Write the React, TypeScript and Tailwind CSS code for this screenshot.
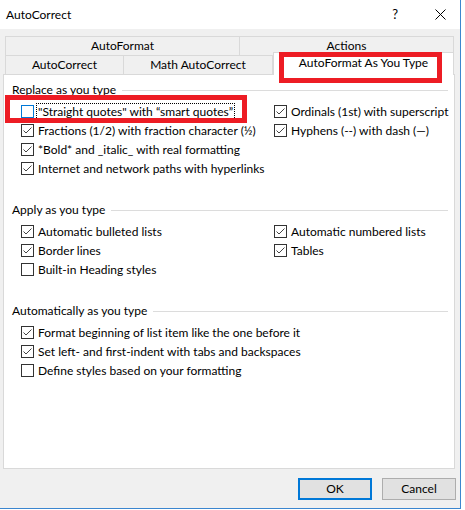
import React from "react";

const font = { fontFamily: 'Lato, "Noto Sans", Arial, sans-serif' };

function Box({ checked, focus }: { checked?: boolean; focus?: boolean }) {
  return (
    <svg width="13" height="13" viewBox="0 0 13 13" className="shrink-0">
      <rect
        x="0.5"
        y="0.5"
        width="12"
        height="12"
        fill="#ffffff"
        stroke={focus ? "#0078d7" : "#333333"}
      />
      {checked && (
        <polyline
          points="2.5,6.5 5,9 10.5,3.5"
          fill="none"
          stroke="#444444"
          strokeWidth="1"
        />
      )}
    </svg>
  );
}

function Row({
  label,
  checked,
  focus,
}: {
  label: string;
  checked?: boolean;
  focus?: boolean;
}) {
  return (
    <div className="flex h-[19px] items-center">
      <Box checked={checked} focus={focus} />
      {focus ? (
        <span className="ml-[2px] border border-dotted border-black px-[1px] leading-[15px]">
          {label}
        </span>
      ) : (
        <span className="ml-[4px] whitespace-nowrap">{label}</span>
      )}
    </div>
  );
}

function Header({ label }: { label: string }) {
  return (
    <div className="flex h-[16px] items-center pr-[6px]">
      <span className="whitespace-nowrap">{label}</span>
      <div className="ml-[6px] h-px flex-1 bg-[#dcdcdc]" />
    </div>
  );
}

export default function App() {
  return (
    <div
      className="relative h-[510px] w-[465px] bg-white text-[12px] text-black"
      style={font}
    >
      <div className="flex h-[509px] w-[461px] flex-col border-b border-r border-[#3b86cf]">
        {/* title bar */}
        <div className="flex h-[29px] items-center bg-white pl-[6px]">
          <span className="flex-1 text-[12px]">AutoCorrect</span>
          <span className="mr-[37px] text-[13px]">?</span>
          <svg width="11" height="11" viewBox="0 0 11 11" className="mr-[14px]">
            <path d="M0.5 0.5 L10.5 10.5 M10.5 0.5 L0.5 10.5" stroke="#000" strokeWidth="1" />
          </svg>
        </div>
        {/* body */}
        <div className="flex flex-1 flex-col bg-[#f0f0f0] pl-[3px] pt-[7px]">
          <div className="ml-[2px] w-[449px]">
            <div className="flex h-[19px]">
              <div className="flex w-[235px] items-center justify-center border-l border-r border-t border-[#d9d9d9]">
                AutoFormat
              </div>
              <div className="flex flex-1 items-center justify-center border-r border-t border-[#d9d9d9]">
                Actions
              </div>
            </div>
            <div className="flex h-[19px] items-end border-t border-[#d9d9d9]">
              <div className="flex h-[18px] w-[119px] items-center justify-center border-l border-r border-[#d9d9d9]">
                AutoCorrect
              </div>
              <div className="flex h-[18px] w-[149px] items-center justify-center border-r border-[#d9d9d9]">
                Math AutoCorrect
              </div>
              <div className="relative z-10 -mb-px flex h-[23px] flex-1 items-center justify-center border-l border-r border-t border-[#d9d9d9] bg-white pb-[2px]">
                AutoFormat As You Type
              </div>
            </div>
          </div>
          <div className="h-[395px] w-[452px] border border-[#d9d9d9] bg-white pl-[8px] pt-[7px]">
            <Header label="Replace as you type" />
            <div className="mt-[4px] flex pl-[9px]">
              <div className="w-[253px]">
                <Row label={'"Straight quotes" with \u201csmart quotes\u201d'} focus />
                <Row label="Fractions (1/2) with fraction character (½)" checked />
                <Row label="*Bold* and _italic_ with real formatting" checked />
                <Row label="Internet and network paths with hyperlinks" checked />
              </div>
              <div>
                <Row label="Ordinals (1st) with superscript" checked />
                <Row label="Hyphens (--) with dash (—)" checked />
              </div>
            </div>
            <div className="mt-[24px]">
              <Header label="Apply as you type" />
            </div>
            <div className="mt-[4px] flex pl-[9px]">
              <div className="w-[253px]">
                <Row label="Automatic bulleted lists" checked />
                <Row label="Border lines" checked />
                <Row label="Built-in Heading styles" />
              </div>
              <div>
                <Row label="Automatic numbered lists" checked />
                <Row label="Tables" checked />
              </div>
            </div>
            <div className="mt-[24px]">
              <Header label="Automatically as you type" />
            </div>
            <div className="mt-[4px] pl-[9px]">
              <Row label="Format beginning of list item like the one before it" checked />
              <Row label="Set left- and first-indent with tabs and backspaces" checked />
              <Row label="Define styles based on your formatting" />
            </div>
          </div>
          <div className="mt-[9px] flex justify-end gap-[10px] pr-[4px]">
            <button className="flex h-[22px] w-[74px] items-center justify-center border-2 border-[#0078d7] bg-[#e1e1e1]">
              OK
            </button>
            <button className="flex h-[22px] w-[74px] items-center justify-center border border-[#adadad] bg-[#e1e1e1]">
              Cancel
            </button>
          </div>
        </div>
      </div>
      {/* annotation boxes */}
      <div className="pointer-events-none absolute left-[5px] top-[95px] z-20 h-[28px] w-[242px] border-[5px] border-[#ed1c24]" />
      <div className="pointer-events-none absolute left-[279px] top-[52px] z-20 h-[31px] w-[163px] border-[5px] border-[#ed1c24]" />
    </div>
  );
}
